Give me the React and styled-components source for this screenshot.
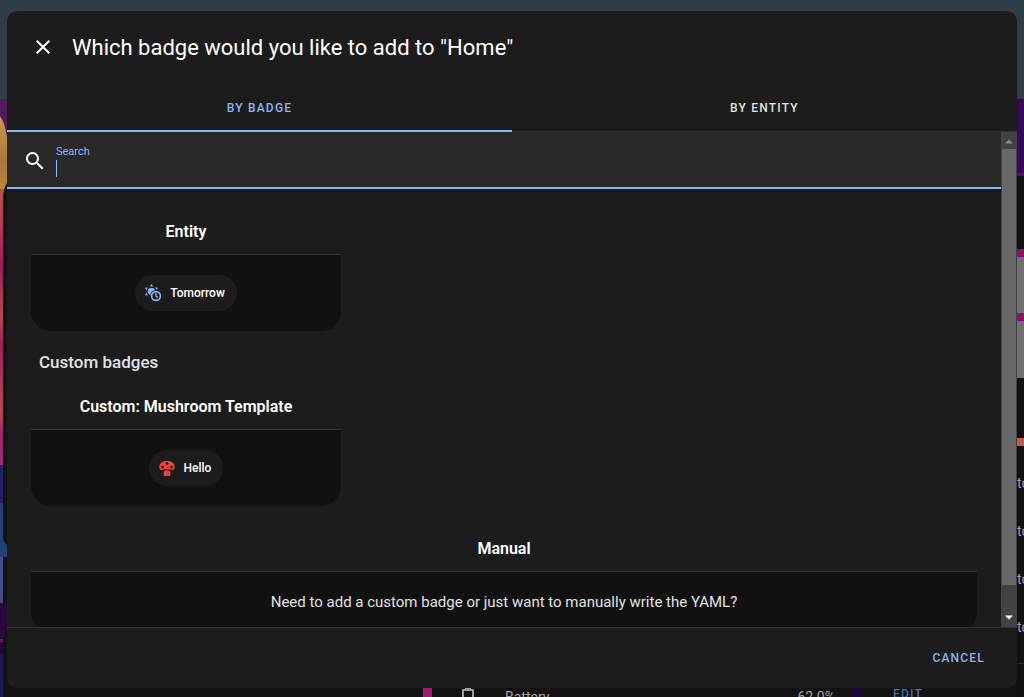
import React, { useState } from "react";
import styled, { createGlobalStyle } from "styled-components";

const tabs = ["By badge", "By entity"];

const SunClockIcon = () => (
  <svg width="18" height="18" viewBox="0 0 24 24" fill="#8ab4f8" aria-hidden="true">
    <path d="M10 0l2.39 3.42a7 7 0 0 0-4.78 0zM1.34 5l4.16-.35a7 7 0 0 0-2.39 4.14zM1.36 15l1.76-3.77a7 7 0 0 0 2.38 4.14zM18.65 5l-4.15-.36a7 7 0 0 1 2.3 3.2z" />
    <path d="M10 5a5 5 0 0 1 4.7 3.31A7.8 7.8 0 0 0 8.31 14.7 5 5 0 0 1 10 5z" />
    <path
      fillRule="evenodd"
      d="M16 9a7 7 0 1 1 0 14 7 7 0 0 1 0-14zm0 2.2a4.8 4.8 0 1 0 0 9.6 4.8 4.8 0 0 0 0-9.6z"
    />
    <path d="M15 12h1.7v3.7l2.7 1.6-.8 1.4-3.600-2.100z" />
  </svg>
);

const MushroomIcon = () => (
  <svg width="18" height="18" viewBox="0 0 24 24" fill="#f44336" aria-hidden="true">
    <path
      fillRule="evenodd"
      d="M12 2.3c5.8 0 10.3 3.7 10.3 8.4 0 2.3-1.2 3.8-3 3.8-1.6 0-3.6-1.1-7.3-1.1s-5.7 1.1-7.3 1.1c-1.8 0-3-1.5-3-3.8C1.7 6 6.2 2.3 12 2.3zM12 4a1.9 1.9 0 1 0 0 3.8A1.9 1.9 0 0 0 12 4zM6 8.9a1.9 1.9 0 1 0 0 3.8 1.9 1.9 0 0 0 0-3.8zM18 8.9a1.9 1.9 0 1 0 0 3.8 1.9 1.9 0 0 0 0-3.8z"
    />
    <path d="M8.5 15.5c2.2-.5 4.8-.5 7 0 .2 2 1.2 3.4 1.2 5 0 1.5-.8 2.3-2.2 2.3h-5c-1.4 0-2.2-.8-2.2-2.3 0-1.6 1-3 1.2-5z" />
  </svg>
);

const CloseIcon = () => (
  <svg width="24" height="24" viewBox="0 0 24 24" fill="currentColor" aria-hidden="true">
    <path d="M19 6.41L17.59 5 12 10.59 6.41 5 5 6.41 10.59 12 5 17.59 6.41 19 12 13.41 17.59 19 19 17.59 13.41 12z" />
  </svg>
);

const SearchIcon = () => (
  <svg width="24" height="24" viewBox="0 0 24 24" fill="currentColor" aria-hidden="true">
    <path d="M9.5 3A6.5 6.5 0 0 1 16 9.5c0 1.61-.59 3.09-1.56 4.23l.27.27h.79l5 5-1.5 1.5-5-5v-.79l-.27-.27A6.5 6.5 0 1 1 9.5 3m0 2a4.5 4.5 0 1 0 0 9 4.5 4.5 0 0 0 0-9z" />
  </svg>
);

const BatteryIcon = () => (
  <svg width="24" height="24" viewBox="0 0 24 24" fill="#a0a0a0" aria-hidden="true">
    <path d="M16 20H8V6h8m.67-2H15V2H9v2H7.33C6.6 4 6 4.6 6 5.33v15.34C6 21.4 6.6 22 7.33 22h9.34c.73 0 1.33-.6 1.33-1.33V5.33C18 4.6 17.4 4 16.67 4z" />
  </svg>
);

// slice of wallpaper that peeks out on the left side of the dialog
const Wallpaper = () => (
  <WallpaperSvg viewBox="0 0 7 598" aria-hidden="true">
    <defs>
      <linearGradient id="gold" x1="0" y1="0" x2="0" y2="1">
        <stop offset="0" stopColor="#c19a45" />
        <stop offset="0.6" stopColor="#ad783e" />
        <stop offset="1" stopColor="#b8863f" />
      </linearGradient>
      <linearGradient id="sunset" x1="0" y1="0" x2="0" y2="1">
        <stop offset="0" stopColor="#bf4f48" />
        <stop offset="0.12" stopColor="#b63c58" />
        <stop offset="0.28" stopColor="#9c1c60" />
        <stop offset="0.46" stopColor="#b24a50" />
        <stop offset="0.56" stopColor="#a02060" />
        <stop offset="0.8" stopColor="#b84658" />
        <stop offset="0.9" stopColor="#98286e" />
        <stop offset="1" stopColor="#98307c" />
      </linearGradient>
    </defs>
    <rect width="7" height="92" fill="#521b5c" />
    <path d="M0 17Q5 24 7 38V90H0z" fill="url(#gold)" />
    <rect y="90" width="4" height="276" fill="url(#sunset)" />
    <path d="M3 98Q4 88 7 84V598H3z" fill="#121212" />
    <rect y="366" width="3" height="38" fill="#23206a" />
    <path d="M0 404h3v34q1 6 4 8v12H0z" fill="#243f78" />
    <rect y="458" width="3" height="46" fill="#464a86" />
    <path d="M0 504h3l4 4v22q-3 4-4 14v16H0z" fill="#25083e" />
    <rect y="540" width="3" height="3" fill="#6b1766" />
    <rect y="556" width="3" height="42" fill="#1a1b55" />
  </WallpaperSvg>
);

const App = () => {
  const [activeTab, setActiveTab] = useState(0);
  const [search, setSearch] = useState("");

  return (
    <Page>
      <GlobalStyle />
      <Dashboard>
        <AppBar />
        <Columns>
          <Wallpaper />
          <Card />
          <Gutter $color="#a31b71" $width={9} />
          <MiddleCard>
            <EntityRow>
              <BatteryIcon />
              <EntityName>Battery</EntityName>
              <span>62.0%</span>
            </EntityRow>
          </MiddleCard>
          <Gutter $color="#1f053f" $width={8} />
          <LastCard>
            <EditButton type="button">Edit</EditButton>
          </LastCard>
          <Rail>
            <Block $height={74} $color="#35085a" />
            <Block $height={3} $color="#5c0f60" />
            <Block $height={73} $color="#111111" />
            <Block $height={8} $color="#8d1465" />
            <Block $height={56} $color="#707070" />
            <Block $height={8} $color="#8d1465" />
            <Block $height={57} $color="#707070" />
            <Block $height={60} $color="#111111" />
            <Block $height={8} $color="#b85b4c" />
            <Block $height={13} $color="#111111" />
            <RailText>to</RailText>
            <RailText>to</RailText>
            <RailText>to</RailText>
            <RailText>to</RailText>
            <Block $height={12} $color="#111111" />
            <Block $height={1} $color="#2a2a2a" />
          </Rail>
        </Columns>
      </Dashboard>

      <Overlay>
        <Dialog role="dialog" aria-labelledby="dialog-title">
          <Header>
            <IconButton type="button" aria-label="Close">
              <CloseIcon />
            </IconButton>
            <Title id="dialog-title">
              Which badge would you like to add to "Home"
            </Title>
          </Header>

          <TabBar role="tablist">
            {tabs.map((tab, index) => (
              <Tab
                key={tab}
                type="button"
                role="tab"
                aria-selected={index === activeTab}
                $active={index === activeTab}
                onClick={() => setActiveTab(index)}
              >
                {tab}
              </Tab>
            ))}
          </TabBar>

          <Body>
            <Content>
              <SearchBar>
                <SearchIcon />
                <Field>
                  <Label htmlFor="search">Search</Label>
                  <InputLine>
                    {!search && <Caret />}
                    <Input
                      id="search"
                      type="text"
                      value={search}
                      onChange={(e) => setSearch(e.target.value)}
                    />
                  </InputLine>
                </Field>
              </SearchBar>

              <Picker>
                <BadgeCard>
                  <CardTitle>Entity</CardTitle>
                  <Preview>
                    <Badge type="button">
                      <SunClockIcon />
                      Tomorrow
                    </Badge>
                  </Preview>
                </BadgeCard>

                <SectionTitle>Custom badges</SectionTitle>
                <BadgeCard>
                  <CardTitle>Custom: Mushroom Template</CardTitle>
                  <Preview>
                    <Badge type="button">
                      <MushroomIcon />
                      Hello
                    </Badge>
                  </Preview>
                </BadgeCard>

                <ManualCard>
                  <CardTitle>Manual</CardTitle>
                  <Preview>
                    Need to add a custom badge or just want to manually write
                    the YAML?
                  </Preview>
                </ManualCard>
              </Picker>
            </Content>

            <Scrollbar aria-hidden="true">
              <Arrow viewBox="0 0 16 16">
                <path d="M8 7l4 4H4z" fill="#8c8c8c" />
              </Arrow>
              <Track>
                <Thumb />
              </Track>
              <Arrow viewBox="0 0 16 16">
                <path d="M4 5h8l-4 4z" fill="#ffffff" />
              </Arrow>
            </Scrollbar>
          </Body>

          <Footer>
            <TextButton type="button">Cancel</TextButton>
          </Footer>
        </Dialog>
      </Overlay>
    </Page>
  );
};

//styled components
const GlobalStyle = createGlobalStyle`
  * {
    box-sizing: border-box;
  }

  body {
    margin: 0;
    background: #111111;
    color: #e1e1e1;
    font-family: Roboto, "Liberation Sans", sans-serif;
    font-size: 14px;
  }

  button,
  input {
    font-family: inherit;
    border: none;
    background: none;
    padding: 0;
    outline: none;
  }

  button {
    cursor: pointer;
  }
`;

const Page = styled.div`
  position: relative;
  height: 100vh;
  overflow: hidden;
`;

const Dashboard = styled.div`
  display: flex;
  flex-direction: column;
  height: 100%;
`;

const AppBar = styled.header`
  flex: none;
  height: 99px;
  background: #2f3e46;
`;

// taller than what is left of the window, so the last row runs off the bottom
const Columns = styled.div`
  flex: none;
  display: flex;
  height: calc(100% - 81px);
`;

const WallpaperSvg = styled.svg`
  flex: none;
  width: 7px;
  height: 598px;
`;

const Card = styled.div`
  flex: 1;
  display: flex;
  flex-direction: column;
  justify-content: flex-end;
  background: #121212;
`;

const MiddleCard = styled(Card)`
  flex: none;
  width: 421px;
`;

const LastCard = styled(Card)`
  flex: none;
  width: 156px;
  align-items: flex-start;
  padding: 0 32px;
`;

const Gutter = styled.div`
  flex: none;
  width: ${(props) => props.$width}px;
  background: ${(props) => props.$color};
`;

const EntityRow = styled.div`
  display: flex;
  align-items: center;
  height: 36px;
  padding: 0 18px 0 24px;
  color: #a0a0a0;
`;

const EntityName = styled.span`
  flex: 1;
  padding-left: 25px;
`;

const EditButton = styled.button`
  height: 42px;
  color: #4a6da8;
  font-size: 12px;
  font-weight: 500;
  letter-spacing: 0.1em;
  text-transform: uppercase;
`;

const Rail = styled.div`
  flex: none;
  width: 7px;
  overflow: hidden;
  background: #111111;
`;

const Block = styled.div`
  height: ${(props) => props.$height}px;
  background: ${(props) => props.$color};
`;

const RailText = styled.div`
  height: 48px;
  color: #a09c98;
  line-height: 48px;
`;

const Overlay = styled.div`
  position: absolute;
  inset: 0;
  display: flex;
  padding: 11px 7px 9px;
`;

const Dialog = styled.section`
  flex: 1;
  display: flex;
  flex-direction: column;
  min-width: 0;
  overflow: hidden;
  border-radius: 10px;
  background: #1c1c1c;
`;

const Header = styled.header`
  flex: none;
  display: flex;
  align-items: center;
  height: 72px;
  padding: 0 24px;
`;

const IconButton = styled.button`
  display: flex;
  color: #ffffff;
`;

const Title = styled.h1`
  margin: 0;
  padding: 2px 0 0 17px;
  color: #ffffff;
  font-size: 22px;
  font-weight: 400;
  line-height: 28px;
`;

const TabBar = styled.div`
  flex: none;
  display: flex;
  height: 49px;
  border-bottom: 1px solid #333333;
`;

const Tab = styled.button`
  flex: 1;
  margin-bottom: -1px;
  padding-top: 2px;
  border-bottom: 2px solid
    ${(props) => (props.$active ? "#8ab4f8" : "transparent")};
  color: ${(props) => (props.$active ? "#8ab4f8" : "#e1e1e1")};
  font-size: 12px;
  font-weight: 500;
  letter-spacing: 0.1em;
  text-transform: uppercase;
`;

const Body = styled.div`
  flex: 1;
  display: flex;
  min-height: 0;
`;

const Content = styled.div`
  flex: 1;
  min-width: 0;
  overflow-y: auto;
  scrollbar-width: none;
`;

const SearchBar = styled.div`
  display: flex;
  align-items: center;
  height: 57px;
  padding: 2px 16px 0;
  border-bottom: 2px solid #8ab4f8;
  background: #292929;
  color: #ffffff;
`;

const Field = styled.div`
  flex: 1;
  padding-left: 9px;
`;

const Label = styled.label`
  display: block;
  color: #8ab4f8;
  font-size: 11px;
  line-height: 16px;
`;

const InputLine = styled.div`
  display: flex;
  align-items: center;
  height: 17px;
`;

const Caret = styled.span`
  width: 1px;
  height: 17px;
  background: #8ab4f8;
`;

const Input = styled.input`
  flex: 1;
  height: 17px;
  color: #e1e1e1;
  caret-color: transparent;
  font-size: 16px;
`;

const Picker = styled.div`
  display: grid;
  grid-template-columns: repeat(auto-fill, minmax(300px, 1fr));
  column-gap: 8px;
  padding: 21px 24px;
`;

const BadgeCard = styled.article`
  grid-column: 1;
  overflow: hidden;
  border-radius: 20px;
`;

const ManualCard = styled(BadgeCard)`
  grid-column: 1 / -1;
  margin-top: 21px;
`;

const CardTitle = styled.h2`
  margin: 0;
  padding: 12px 0;
  color: #ffffff;
  font-size: 16px;
  font-weight: 600;
  line-height: 20px;
  text-align: center;
`;

const Preview = styled.div`
  display: flex;
  align-items: center;
  justify-content: center;
  padding: 20px;
  border-top: 1px solid #333333;
  background: #111111;
  font-size: 15px;
  line-height: 20px;
`;

const Badge = styled.button`
  display: flex;
  align-items: center;
  gap: 8px;
  height: 36px;
  padding: 0 12px 0 9px;
  border-radius: 18px;
  background: #1c1c1c;
  color: #ffffff;
  font-size: 12px;
  font-weight: 500;
`;

const SectionTitle = styled.h3`
  grid-column: 1 / -1;
  margin: 0;
  padding: 20px 8px 12px;
  color: #e1e1e1;
  font-size: 17px;
  font-weight: 500;
  line-height: 22px;
`;

const Scrollbar = styled.div`
  flex: none;
  display: flex;
  flex-direction: column;
  width: 16px;
  background: #424242;
`;

const Arrow = styled.svg`
  flex: none;
  width: 16px;
  height: 17px;
`;

const Track = styled.div`
  flex: 1;
  padding: 0 1px;
`;

const Thumb = styled.div`
  height: calc(100% - 25px);
  background: #686868;
`;

const Footer = styled.footer`
  flex: none;
  display: flex;
  align-items: center;
  justify-content: flex-end;
  height: 61px;
  padding: 0 32px;
  border-top: 1px solid #333333;
`;

const TextButton = styled.button`
  color: #8ab4f8;
  font-size: 12px;
  font-weight: 500;
  letter-spacing: 0.1em;
  text-transform: uppercase;
`;

export default App;
